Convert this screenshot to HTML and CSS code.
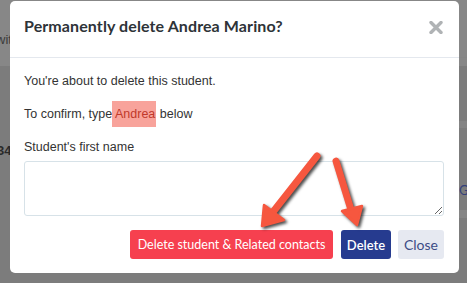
FILE: index.html
```html
<!DOCTYPE html>
<html>
<head>
<meta charset="utf-8">
<link rel="stylesheet" href="styles.css">
</head>
<body>
<div class="page">
  <div class="page-top"><span class="bg-wit">wit</span></div>
  <div class="page-main"><span class="bg-num">34</span></div>
  <div class="page-right">
    <div class="band band1"></div>
    <div class="band band2"></div>
    <span class="bg-g">G</span>
    <div class="band band3"></div>
  </div>
</div>

<div class="modal">
  <div class="modal-header">
    <h2 class="modal-title">Permanently delete Andrea Marino?</h2>
    <svg class="modal-close" width="14" height="13" viewBox="0 0 14 13">
      <path d="M2 1.5 L12 11.5 M12 1.5 L2 11.5" stroke="#b0b3b5" stroke-width="3.4" stroke-linecap="round"/>
    </svg>
  </div>
  <div class="modal-body">
    <p class="line">You're about to delete this student.</p>
    <p class="line">To confirm, type<span class="mark"> Andrea</span> below</p>
    <p class="line">Student's first name</p>
    <textarea class="field"></textarea>
    <div class="actions">
      <button class="btn btn-red">Delete student &amp; Related contacts</button>
      <button class="btn btn-navy">Delete</button>
      <button class="btn btn-light">Close</button>
    </div>
  </div>
</div>

<svg class="arrows" width="467" height="283" viewBox="0 0 467 283">
  <g class="arrow">
    <line x1="317" y1="156" x2="269" y2="217" stroke="#f6573f" stroke-width="7" stroke-linecap="round"/>
    <polygon points="262,226 264,205 284,220" fill="#f6573f" stroke="#f6573f" stroke-width="2.5" stroke-linejoin="round"/>
  </g>
  <g class="arrow">
    <line x1="336" y1="161" x2="352" y2="213" stroke="#f6573f" stroke-width="7" stroke-linecap="round"/>
    <polygon points="357,225 342,211 362,206" fill="#f6573f" stroke="#f6573f" stroke-width="2.5" stroke-linejoin="round"/>
  </g>
</svg>
</body>
</html>
```
FILE: styles.css
```css
* { box-sizing: border-box; }
html, body { margin: 0; padding: 0; }
body {
  width: 467px;
  height: 283px;
  overflow: hidden;
  background: #7c7c7c;
  font-family: "Liberation Sans", Arial, sans-serif;
  position: relative;
}
.page { position: absolute; inset: 0; }
.page-top {
  height: 66px;
  background: #878787;
  position: relative;
}
.bg-wit {
  position: absolute;
  left: -4px;
  top: 32px;
  font-size: 13px;
  color: #3b3b3b;
}
.page-main { position: relative; }
.bg-num {
  position: absolute;
  left: -3px;
  top: 77px;
  font-size: 13px;
  font-weight: bold;
  color: #2a2a2a;
}
.page-right {
  position: absolute;
  left: 459px;
  top: 0;
  width: 8px;
  height: 283px;
}
.band { position: absolute; left: 0; width: 8px; }
.band1 { top: 57px; height: 1px; background: #858585; }
.band2 { top: 121px; height: 7px; background: #848484; }
.band3 { top: 210px; height: 8px; background: #858585; }
.bg-g {
  position: absolute;
  left: 0;
  top: 182px;
  font-family: "Lato", sans-serif;
  font-size: 13px;
  color: #33407a;
}

.modal {
  position: absolute;
  left: 10px;
  top: 1px;
  width: 449px;
  height: 272px;
  background: #fff;
  border-radius: 5px;
  display: flex;
  flex-direction: column;
}
.modal-header {
  height: 58px;
  border-bottom: 1px solid #e4e8ee;
  display: flex;
  align-items: center;
  justify-content: space-between;
  padding: 0 16px 7px 14px;
}
.modal-title {
  margin: 0;
  font-family: "Lato", sans-serif;
  font-weight: 700;
  font-size: 16px;
  color: #2e3338;
  letter-spacing: 0.1px;
}
.modal-close { display: block; margin-top: 4px; }
.modal-body {
  padding: 13px 15px 14px 14px;
  display: flex;
  flex-direction: column;
}
.line {
  margin: 0 0 13px 0;
  font-size: 12.5px;
  line-height: 20px;
  color: #333;
  height: 20px;
}
.line:nth-child(3) { margin-bottom: 4px; }
.mark {
  background: #f8a39b;
  color: #c0392b;
  padding: 6px 1px 6px 0;
}
.field {
  width: 420px;
  height: 55px;
  border: 1px solid #d7e2e8;
  border-radius: 3px;
  resize: vertical;
  margin: 0;
  display: block;
}
.actions {
  margin-top: 14px;
  display: flex;
  justify-content: flex-end;
  gap: 7px;
}
.btn {
  height: 29px;
  border: none;
  border-radius: 3px;
  font-family: "Lato", sans-serif;
  font-size: 13px;
  padding: 0;
  white-space: nowrap;
  text-align: center;
  cursor: pointer;
}
.btn-red { background: #f6404f; color: #fff; width: 203px; margin-right: 1px; font-size: 12.5px; }
.btn-navy { background: #263b8f; color: #fff; width: 50px; font-weight: 600; }
.btn-light { background: #e6e9f1; color: #3d4c86; width: 46px; font-size: 14px; }

.arrows {
  position: absolute;
  left: 0;
  top: 0;
  pointer-events: none;
}
.arrow { filter: drop-shadow(2px 2px 1.5px rgba(0,0,0,0.7)); }
```
